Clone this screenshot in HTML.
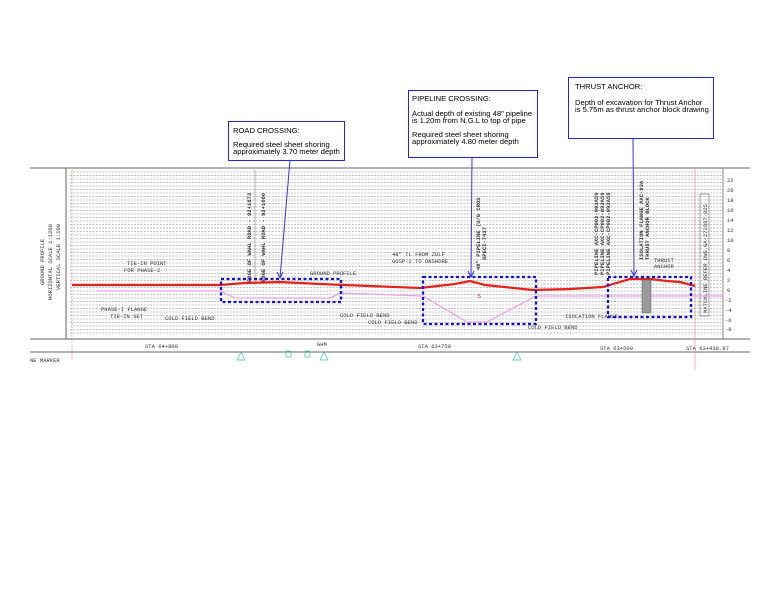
<!DOCTYPE html>
<html><head><meta charset="utf-8"><style>
html,body{margin:0;padding:0;background:#fff;}
svg{display:block}
.n{font-family:"Liberation Sans",sans-serif;font-size:7.6px;fill:#000}
.c{font-family:"Liberation Mono",monospace;font-size:5.5px;fill:#333}
</style></head><body>
<svg width="768" height="594" viewBox="0 0 768 594" xmlns="http://www.w3.org/2000/svg">
<rect width="768" height="594" fill="#fff"/>
<line x1="30" y1="168" x2="750" y2="168" stroke="#666" stroke-width="1"/>
<line x1="66" y1="168" x2="66" y2="339" stroke="#666"/>
<line x1="723" y1="168" x2="723" y2="339" stroke="#888"/>
<line x1="30" y1="339" x2="750" y2="339" stroke="#666"/>
<line x1="30" y1="352" x2="750" y2="352" stroke="#666"/>
<g stroke="#888" stroke-width="0.6" stroke-dasharray="2,1.2">
<line x1="70" y1="172" x2="722" y2="172"/><line x1="70" y1="175.5" x2="722" y2="175.5"/><line x1="70" y1="179" x2="722" y2="179"/><line x1="70" y1="182.5" x2="722" y2="182.5"/><line x1="70" y1="186" x2="722" y2="186"/><line x1="70" y1="189.5" x2="722" y2="189.5"/><line x1="70" y1="193" x2="722" y2="193"/><line x1="70" y1="196.5" x2="722" y2="196.5"/><line x1="70" y1="200" x2="722" y2="200"/><line x1="70" y1="203.5" x2="722" y2="203.5"/><line x1="70" y1="207" x2="722" y2="207"/><line x1="70" y1="210.5" x2="722" y2="210.5"/><line x1="70" y1="214" x2="722" y2="214"/><line x1="70" y1="217.5" x2="722" y2="217.5"/><line x1="70" y1="221" x2="722" y2="221"/><line x1="70" y1="224.5" x2="722" y2="224.5"/><line x1="70" y1="228" x2="722" y2="228"/><line x1="70" y1="231.5" x2="722" y2="231.5"/><line x1="70" y1="235" x2="722" y2="235"/><line x1="70" y1="238.5" x2="722" y2="238.5"/><line x1="70" y1="242" x2="722" y2="242"/><line x1="70" y1="245.5" x2="722" y2="245.5"/><line x1="70" y1="249" x2="722" y2="249"/><line x1="70" y1="252.5" x2="722" y2="252.5"/><line x1="70" y1="256" x2="722" y2="256"/><line x1="70" y1="259.5" x2="722" y2="259.5"/><line x1="70" y1="263" x2="722" y2="263"/><line x1="70" y1="266.5" x2="722" y2="266.5"/><line x1="70" y1="270" x2="722" y2="270"/><line x1="70" y1="273.5" x2="722" y2="273.5"/><line x1="70" y1="277" x2="722" y2="277"/><line x1="70" y1="280.5" x2="722" y2="280.5"/><line x1="70" y1="284" x2="722" y2="284"/><line x1="70" y1="287.5" x2="722" y2="287.5"/><line x1="70" y1="291" x2="722" y2="291"/><line x1="70" y1="294.5" x2="722" y2="294.5"/><line x1="70" y1="298" x2="722" y2="298"/><line x1="70" y1="301.5" x2="722" y2="301.5"/><line x1="70" y1="305" x2="722" y2="305"/><line x1="70" y1="308.5" x2="722" y2="308.5"/><line x1="70" y1="312" x2="722" y2="312"/><line x1="70" y1="315.5" x2="722" y2="315.5"/><line x1="70" y1="319" x2="722" y2="319"/><line x1="70" y1="322.5" x2="722" y2="322.5"/><line x1="70" y1="326" x2="722" y2="326"/><line x1="70" y1="329.5" x2="722" y2="329.5"/><line x1="70" y1="333" x2="722" y2="333"/>
</g>
<line x1="72" y1="170" x2="72" y2="360" stroke="#f08080" stroke-width="0.6" stroke-dasharray="2,1"/>
<line x1="695" y1="168" x2="695" y2="370" stroke="#f08080" stroke-width="0.6"/>
<g class="c"><text x="727" y="182">22</text><text x="727" y="192">20</text><text x="727" y="202">18</text><text x="727" y="212">16</text><text x="727" y="222">14</text><text x="727" y="232">12</text><text x="727" y="242">10</text><text x="727" y="252">8</text><text x="727" y="262">6</text><text x="727" y="272">4</text><text x="727" y="282">2</text><text x="727" y="292">0</text><text x="725" y="302">-2</text><text x="725" y="312">-4</text><text x="725" y="322">-6</text><text x="725" y="331">-8</text></g>
<text class="c" transform="translate(44,285) rotate(-90)">GROUND PROFILE</text>
<text class="c" transform="translate(52,300) rotate(-90)">HORIZONTAL SCALE 1:1200</text>
<text class="c" transform="translate(60,290) rotate(-90)">VERTICAL SCALE 1:100</text>
<rect x="700" y="194" width="9" height="122" fill="none" stroke="#666" stroke-width="0.6"/>
<text class="c" transform="translate(707,313) rotate(-90)">MATCHLINE REFER DWG.GA-272887-825</text>
<g style="font-weight:bold">
<text class="c" transform="translate(251,282) rotate(-90)">EDGE OF WAHL ROAD - 92+1873</text>
<text class="c" transform="translate(265,282) rotate(-90)">EDGE OF WAHL ROAD - 92+1880</text>
<text class="c" transform="translate(480,270) rotate(-90)">48" PIPELINE (U/G CROS</text>
<text class="c" transform="translate(486,260) rotate(-90)">SPECI-7437</text>
<text class="c" transform="translate(598,275) rotate(-90)">PIPELINE AXC-CP002-093A59</text>
<text class="c" transform="translate(604,275) rotate(-90)">PIPELINE AXC-CP002-093A59</text>
<text class="c" transform="translate(610,275) rotate(-90)">PIPELINE AXC-CP002-093A59</text>
<text class="c" transform="translate(643,260) rotate(-90)">ISOLATION FLANGE AXC-93A</text>
<text class="c" transform="translate(649,260) rotate(-90)">THRUST ANCHOR BLOCK</text>
</g>
<line x1="255" y1="170" x2="255" y2="285" stroke="#666" stroke-width="0.5"/>
<g class="c">
<text x="127" y="265">TIE-IN POINT</text><text x="124" y="272">FOR PHASE-2</text>
<text x="310" y="275">GROUND PROFILE</text>
<text x="101" y="311">PHASE-I FLANGE</text><text x="110" y="318">TIE-IN  SET</text>
<text x="165" y="320">COLD FIELD BEND</text>
<text x="340" y="317">COLD FIELD BEND</text><text x="368" y="324">COLD FIELD BEND</text>
<text x="392" y="256">48" TL FROM ZULF</text><text x="392" y="263">GOSP-2 TO ONSHORE</text>
<text x="528" y="329">COLD FIELD BEND</text>
<text x="565" y="318">ISOLATION FLANGE</text>
<text x="654" y="262">THRUST</text><text x="654" y="268">ANCHOR</text>
<text x="145" y="348">STA 64+800</text>
<text x="418" y="348">STA 63+750</text>
<text x="600" y="350">STA 63+500</text>
<text x="686" y="350">STA 63+438.87</text>
<text x="30" y="362">NE MARKER</text>
<text x="317" y="346">GHM</text>
</g>
<g fill="none" stroke="#3c9" stroke-width="0.7">
<path d="M237 360 L241 352 L245 360 Z"/><path d="M320 360 L324 352 L328 360 Z"/><path d="M513 360 L517 352 L521 360 Z"/>
<rect x="286" y="351" width="5" height="6"/><rect x="305" y="351" width="5" height="6"/>
</g>
<polyline points="97,291 220,291 235,298 330,298 341,293 423,296 467,322 487,322 536,296 723,296" fill="none" stroke="#e9a0e9" stroke-width="1.3"/>
<polyline points="72,285 160,285 220,285 245,283 280,282 320,284 420,288 455,284 470,281 485,285 533,290 570,289 603,287 630,279 650,279 667,281 680,282 695,286" fill="none" stroke="#e8201a" stroke-width="2.2"/>
<rect x="642" y="280" width="9" height="33" fill="#999" stroke="#555" stroke-width="0.5"/>
<text x="478" y="298" style="font-family:'Liberation Sans',sans-serif;font-size:5px;fill:#e00">5</text>
<g fill="none" stroke="#1010e0" stroke-width="2.3" stroke-dasharray="3,2.5">
<rect x="221" y="279" width="120" height="23"/>
<rect x="423" y="277" width="113" height="47"/>
<rect x="608" y="277" width="83" height="40"/>
</g>
<g stroke="#3333ee" stroke-width="1" fill="none">
<line x1="290" y1="160" x2="280" y2="278"/><path d="M277 272 L280 278 L283 272"/>
<line x1="472" y1="158" x2="471" y2="277"/><path d="M468 271 L471 277 L474 271"/>
<line x1="633" y1="139" x2="634" y2="276"/><path d="M631 270 L634 276 L637 270"/>
</g>
<rect x="228.5" y="121.5" width="116" height="39" fill="#fff" stroke="#2222ee" stroke-width="1"/>
<text class="n"><tspan x="233" y="133">ROAD CROSSING:</tspan><tspan x="233" y="147">Required steel sheet shoring</tspan><tspan x="233" y="154">approximately 3.70 meter depth</tspan></text>
<rect x="408.5" y="90.5" width="129" height="67" fill="#fff" stroke="#2222ee" stroke-width="1"/>
<text class="n"><tspan x="412" y="101">PIPELINE CROSSING:</tspan><tspan x="412" y="116">Actual depth of existing 48" pipeline</tspan><tspan x="412" y="123">is 1.20m from N.G.L to top of pipe</tspan><tspan x="412" y="137">Required steel sheet shoring</tspan><tspan x="412" y="144">approximately 4.80 meter depth</tspan></text>
<rect x="568.5" y="77.5" width="145" height="61" fill="#fff" stroke="#2222ee" stroke-width="1"/>
<text class="n"><tspan x="575" y="89">THRUST ANCHOR:</tspan><tspan x="575" y="105">Depth of excavation for Thrust Anchor</tspan><tspan x="575" y="112">is 5.75m as thrust anchor block drawing</tspan></text>
</svg>
</body></html>
